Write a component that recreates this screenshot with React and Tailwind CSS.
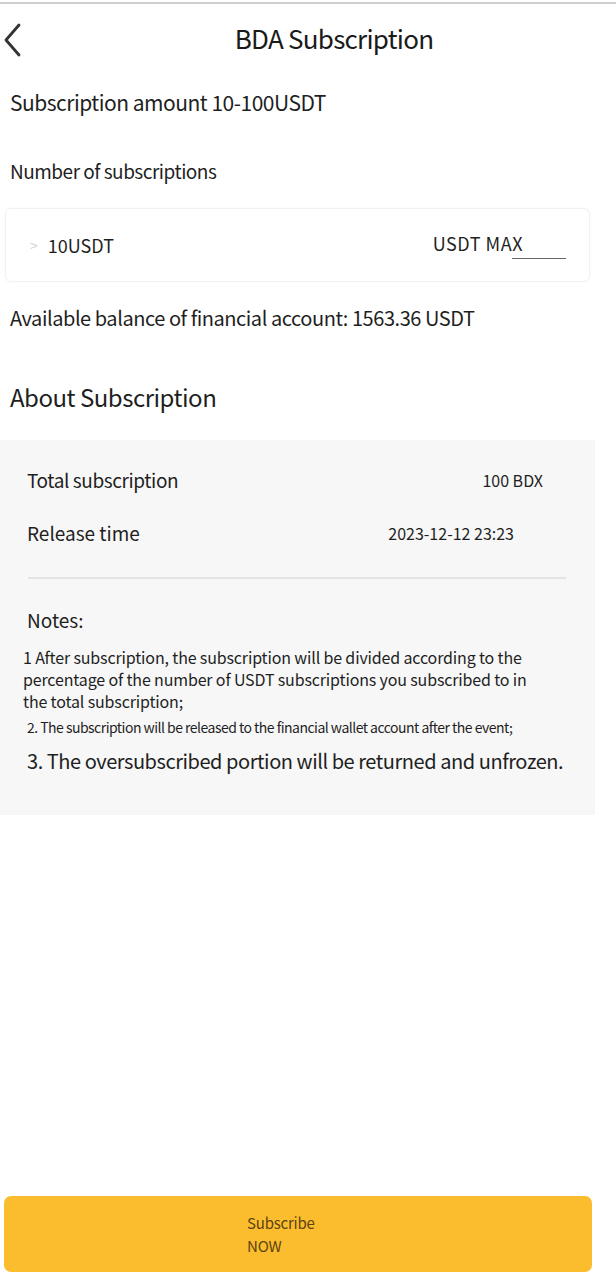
import React from "react";

const font = { fontFamily: '"Noto Sans CJK SC", "Noto Sans", sans-serif' };

export default function App() {
  return (
    <div
      className="w-[616px] min-h-[1280px] bg-white text-[#1f1f1f] flex flex-col"
      style={font}
    >
      <div className="h-[2px] bg-white" />
      <div className="h-[2px] bg-[#cfcfcf]" />

      {/* header */}
      <div className="h-[68px] flex items-center relative">
        <svg
          width="22"
          height="36"
          viewBox="0 0 22 36"
          className="absolute left-[2px] top-[18px]"
        >
          <path
            d="M17 3 L4 18 L17 33"
            fill="none"
            stroke="#333"
            strokeWidth="2.8"
            strokeLinecap="round"
            strokeLinejoin="round"
          />
        </svg>
        <div className="w-full pl-[52px] text-center text-[26px] leading-none tracking-[-0.75px] text-[#1a1a1a]">
          BDA Subscription
        </div>
      </div>

      <div className="h-[62px] flex items-center pl-[10px] text-[21px] tracking-[-0.5px]">
        Subscription amount 10-100USDT
      </div>

      <div className="h-[74px] flex items-center pl-[10px] text-[19px] tracking-[-0.5px]">
        Number of subscriptions
      </div>

      {/* input */}
      <div className="mx-[5px] w-[585px] h-[74px] rounded-[6px] border border-[#f1f1f1] shadow-[0_0_3px_rgba(0,0,0,0.04)] flex items-center">
        <span className="ml-[24px] text-[#cfcfcf] text-[14px]">&gt;</span>
        <span className="ml-[10px] text-[18px]">10USDT</span>
        <div className="ml-auto mr-[23px] flex items-start">
          <span className="text-[18px] leading-[24px] tracking-[0.5px]">USDT MAX</span>
          <span className="block ml-[-11px] mt-[27px] w-[54px] h-[1.5px] bg-[#666]" />
        </div>
      </div>

      <div className="h-[72px] flex items-center pl-[10px] text-[20px] tracking-[-0.45px]">
        Available balance of financial account: 1563.36 USDT
      </div>

      <div className="h-[86px] flex items-center pl-[10px] text-[24px] tracking-[-0.5px]">
        About Subscription
      </div>

      {/* panel */}
      <div className="w-[595px] bg-[#f7f7f7] pt-[15px] pb-[39px] px-[27px]">
        <div className="h-[50px] flex items-center justify-between">
          <span className="text-[19px] tracking-[-0.4px]">Total subscription</span>
          <span className="text-[16px] mr-[25px]">100 BDX</span>
        </div>
        <div className="h-[56px] flex items-center justify-between">
          <span className="text-[19px]">Release time</span>
          <span className="text-[16px] mr-[54px]">2023-12-12 23:23</span>
        </div>
        <div className="mt-[16px] h-[2px] bg-[#e4e4e4] mr-[2px] ml-[1px]" />
        <div className="mt-[26px] text-[19px] leading-[30px]">Notes:</div>
        <div className="mt-[11px] text-[16px] leading-[22px] -ml-[4px] whitespace-nowrap tracking-[-0.15px]">
          <div>1 After subscription, the subscription will be divided according to the</div>
          <div>percentage of the number of USDT subscriptions you subscribed to in</div>
          <div>the total subscription;</div>
        </div>
        <div className="mt-[4px] text-[14px] leading-[22px] whitespace-nowrap tracking-[-0.52px]">
          2. The subscription will be released to the financial wallet account after the event;
        </div>
        <div className="mt-[8px] text-[20px] leading-[30px] whitespace-nowrap tracking-[-0.45px]">
          3. The oversubscribed portion will be returned and unfrozen.
        </div>
      </div>

      {/* button */}
      <div className="mt-auto pb-[8px] px-[4px]">
        <div className="w-[588px] h-[76px] rounded-[7px] bg-[#fbbd2d] flex items-center">
          <div className="ml-[243px] text-[15px] leading-[23px] text-[#5e4311] tracking-[-0.2px]">
            <div>Subscribe</div>
            <div>NOW</div>
          </div>
        </div>
      </div>
    </div>
  );
}
